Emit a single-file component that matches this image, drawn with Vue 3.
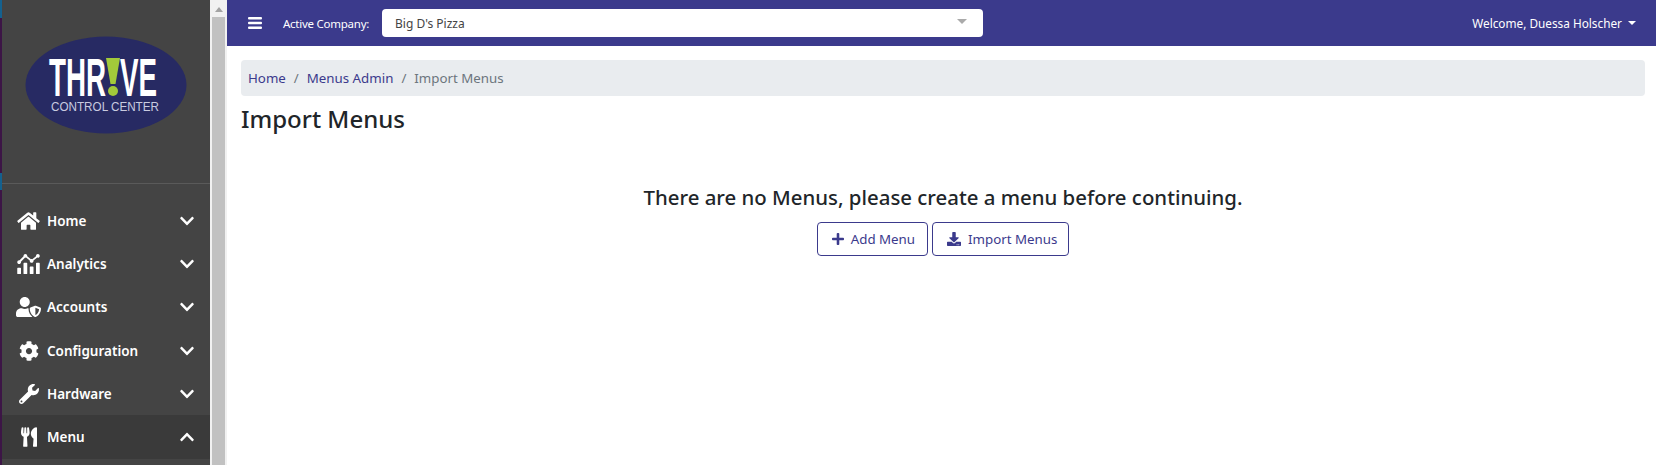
<script setup>
const chevronDown = 'M207.029 381.476L12.686 187.132c-9.373-9.373-9.373-24.569 0-33.941l22.667-22.667c9.357-9.357 24.522-9.375 33.901-.04L224 284.505l154.745-154.021c9.379-9.335 24.544-9.317 33.901.04l22.667 22.667c9.373 9.373 9.373 24.569 0 33.941L240.971 381.476c-9.373 9.372-24.569 9.372-33.942 0z'
const chevronUp = 'M240.971 130.524l194.343 194.343c9.373 9.373 9.373 24.569 0 33.941l-22.667 22.667c-9.357 9.357-24.522 9.375-33.901.04L224 227.495 69.255 381.516c-9.379 9.335-24.544 9.317-33.901-.04l-22.667-22.667c-9.373-9.373-9.373-24.569 0-33.941L207.03 130.525c9.372-9.373 24.568-9.373 33.941-.001z'
const items = [
  { label: 'Home', vb: '0 0 576 512', w: 23, d: ['M280.37 148.26L96 300.11V464a16 16 0 0 0 16 16l112.06-.29a16 16 0 0 0 15.92-16V368a16 16 0 0 1 16-16h64a16 16 0 0 1 16 16v95.64a16 16 0 0 0 16 16.05L464 480a16 16 0 0 0 16-16V300L295.67 148.26a12.19 12.19 0 0 0-15.3 0zM571.6 251.47L488 182.56V44.05a12 12 0 0 0-12-12h-56a12 12 0 0 0-12 12v72.61L318.47 43a48 48 0 0 0-61 0L4.34 251.47a12 12 0 0 0-1.6 16.9l25.5 31A12 12 0 0 0 45.15 301l235.22-193.74a12.19 12.19 0 0 1 15.3 0L530.9 301a12 12 0 0 0 16.9-1.6l25.5-31a12 12 0 0 0-1.7-16.93z'] },
  { label: 'Analytics', vb: '0 0 576 512', w: 23, d: ['M510.62 92.63C516.03 94.74 521.85 96 528 96c26.51 0 48-21.49 48-48S554.51 0 528 0s-48 21.49-48 48c0 2.43.37 4.76.71 7.09l-95.34 76.27c-5.4-2.11-11.23-3.37-17.38-3.37s-11.97 1.26-17.38 3.37L255.29 55.1c.35-2.33.71-4.67.71-7.1 0-26.51-21.49-48-48-48s-48 21.49-48 48c0 4.27.74 8.34 1.78 12.28l-101.5 101.5C56.34 160.74 52.27 160 48 160c-26.51 0-48 21.49-48 48s21.49 48 48 48 48-21.49 48-48c0-4.27-.74-8.34-1.78-12.28l101.5-101.5C199.66 95.26 203.73 96 208 96c6.15 0 11.97-1.26 17.38-3.37l95.34 76.27c-.35 2.33-.71 4.67-.71 7.1 0 26.51 21.49 48 48 48s48-21.49 48-48c0-2.43-.37-4.76-.71-7.09l95.32-76.28zM400 320h-64c-8.84 0-16 7.16-16 16v160c0 8.84 7.16 16 16 16h64c8.84 0 16-7.16 16-16V336c0-8.84-7.16-16-16-16zm160-96h-64c-8.84 0-16 7.16-16 16v256c0 8.84 7.16 16 16 16h64c8.84 0 16-7.16 16-16V240c0-8.84-7.16-16-16-16zm-320 0h-64c-8.84 0-16 7.16-16 16v256c0 8.84 7.16 16 16 16h64c8.84 0 16-7.16 16-16V240c0-8.84-7.16-16-16-16zM80 352H16c-8.84 0-16 7.16-16 16v128c0 8.84 7.16 16 16 16h64c8.84 0 16-7.16 16-16V368c0-8.84-7.16-16-16-16z'] },
  { label: 'Accounts', vb: '0 0 640 512', w: 25, d: ['M622.3 271.1l-115.2-45c-4.1-1.6-12.6-3.7-22.2 0l-115.2 45c-10.7 4.2-17.7 14-17.7 24.9 0 111.6 68.7 188.8 132.9 213.9 9.6 3.7 18 1.6 22.2 0C558.4 489.9 640 420.5 640 296c0-10.9-7-20.7-17.7-24.9zM496 462.4V273.3l95.5 37.3c-5.6 87.1-60.9 135.4-95.5 151.8zM224 256c70.7 0 128-57.3 128-128S294.7 0 224 0 96 57.3 96 128s57.3 128 128 128zm96 40c0-2.5.8-4.8 1.1-7.2-2.5-.1-4.9-.8-7.5-.8h-16.7c-22.2 10.2-46.9 16-72.9 16s-50.6-5.8-72.9-16h-16.7C60.2 288 0 348.2 0 422.4V464c0 26.5 21.5 48 48 48h352c6.8 0 13.3-1.5 19.2-4-54-42.9-99.2-116.7-99.2-212z'] },
  { label: 'Configuration', vb: '0 0 512 512', w: 20, d: ['M487.4 315.7l-42.6-24.6c4.3-23.2 4.3-47 0-70.2l42.6-24.6c4.9-2.8 7.1-8.6 5.5-14-11.1-35.6-30-67.8-54.7-94.6-3.8-4.1-10-5.1-14.8-2.3L380.8 110c-17.9-15.4-38.5-27.3-60.8-35.1V25.8c0-5.6-3.9-10.5-9.4-11.7-36.7-8.2-74.3-7.8-109.2 0-5.5 1.2-9.4 6.1-9.4 11.7V75c-22.2 7.9-42.8 19.8-60.8 35.1L88.7 85.5c-4.9-2.8-11-1.9-14.8 2.3-24.7 26.7-43.6 58.9-54.7 94.6-1.7 5.4.6 11.2 5.5 14L67.3 221c-4.3 23.2-4.3 47 0 70.2l-42.6 24.6c-4.9 2.8-7.1 8.6-5.5 14 11.1 35.6 30 67.8 54.7 94.6 3.8 4.1 10 5.1 14.8 2.3l42.6-24.6c17.9 15.4 38.5 27.3 60.8 35.1v49.2c0 5.6 3.9 10.5 9.4 11.7 36.7 8.2 74.3 7.8 109.2 0 5.5-1.2 9.4-6.1 9.4-11.7v-49.2c22.2-7.9 42.8-19.8 60.8-35.1l42.6 24.6c4.9 2.8 11 1.9 14.8-2.3 24.7-26.7 43.6-58.9 54.7-94.6 1.5-5.5-.7-11.3-5.6-14.1zM256 336c-44.1 0-80-35.9-80-80s35.9-80 80-80 80 35.9 80 80-35.9 80-80 80z'] },
  { label: 'Hardware', vb: '0 0 512 512', w: 20, d: ['M507.73 109.1c-2.24-9.03-13.54-12.09-20.12-5.51l-74.36 74.36-67.88-11.31-11.31-67.88 74.36-74.36c6.62-6.62 3.43-17.9-5.66-20.16-47.38-11.74-99.55.91-136.58 37.93-39.64 39.64-50.55 97.1-34.05 147.2L18.74 402.76c-24.99 24.99-24.99 65.51 0 90.5 24.99 24.99 65.51 24.99 90.5 0l213.21-213.21c50.12 16.71 107.47 5.68 147.37-34.22 37.07-37.07 49.7-89.32 37.91-136.73zM64 472c-13.25 0-24-10.75-24-24 0-13.26 10.75-24 24-24s24 10.74 24 24c0 13.25-10.75 24-24 24z'] },
  { label: 'Menu', vb: '0 0 416 512', w: 16, open: true, d: ['M207.9 15.2c.8 4.7 16.1 94.5 16.1 128.8 0 52.3-27.8 89.6-68.9 104.6L168 486.7c.7 13.7-10.2 25.3-24 25.3H80c-13.7 0-24.7-11.5-24-25.3l12.9-238.1C27.7 233.6 0 196.2 0 144 0 109.6 15.3 19.9 16.1 15.2 19.3-5.1 61.4-5.4 64 16.3v141.2c1.3 3.4 15.1 3.2 16 0 1.4-25.3 7.9-139.2 8-141.8 3.3-20.8 44.7-20.8 47.9 0 .2 2.7 6.6 116.5 8 141.8.9 3.2 14.8 3.4 16 0V16.3c2.6-21.6 44.8-21.4 48-1.1zm119.2 285.7l-15 185.1c-1.2 14 9.9 26 23.9 26h56c13.3 0 24-10.7 24-24V24c0-13.2-10.7-24-24-24-82.5 0-221.4 178.5-64.9 300.9z'] },
]
</script>

<template>
  <div class="app">
    <div class="strip">
      <i class="s-blue s1"></i><i class="s-purple s2"></i><i class="s-blue s3"></i><i class="s-purple s4"></i>
    </div>
    <aside class="sidebar">
      <div class="brand">
        <svg class="logo" viewBox="0 0 162 98" width="162" height="98">
          <ellipse cx="81" cy="49" rx="80.5" ry="48.5" fill="#272a63" />
          <text x="24" y="60" class="lt" textLength="57" lengthAdjust="spacingAndGlyphs">THR</text>
          <polygon points="81,22 95,22 90.5,48 85.5,48" fill="#a2c93a" />
          <circle cx="88" cy="55" r="5" fill="#a2c93a" />
          <text x="95" y="60" class="lt" textLength="37" lengthAdjust="spacingAndGlyphs">VE</text>
          <text x="26" y="75" class="ls" textLength="108" lengthAdjust="spacingAndGlyphs">CONTROL CENTER</text>
        </svg>
      </div>
      <nav class="nav">
        <a v-for="it in items" :key="it.label" class="item" :class="{ open: it.open }">
          <span class="ico">
            <svg :viewBox="it.vb" :style="{ width: it.w + 'px' }" height="20"><path v-for="p in it.d" :key="p" :d="p" fill="#fff" /></svg>
          </span>
          <span class="lbl">{{ it.label }}</span>
          <svg class="chev" viewBox="0 0 448 512" width="14" height="16"><path :d="it.open ? chevronUp : chevronDown" fill="#fff" /></svg>
        </a>
      </nav>
    </aside>
    <div class="scrollbar">
      <div class="arrow"></div>
      <div class="thumb"></div>
    </div>
    <main class="main">
      <header class="topbar">
        <svg class="bars" viewBox="0 0 14 12" width="14" height="12"><rect y="0" width="14" height="2.6" rx="1" fill="#fff"/><rect y="4.7" width="14" height="2.6" rx="1" fill="#fff"/><rect y="9.4" width="14" height="2.6" rx="1" fill="#fff"/></svg>
        <span class="active">Active Company:</span>
        <div class="select">
          <span>Big D's Pizza</span>
          <i class="sel-caret"></i>
        </div>
        <div class="welcome">Welcome, Duessa Holscher<i class="caret"></i></div>
      </header>
      <div class="content">
        <ol class="crumb">
          <li class="link">Home</li>
          <li class="sep">/</li>
          <li class="link">Menus Admin</li>
          <li class="sep">/</li>
          <li class="cur">Import Menus</li>
        </ol>
        <h1>Import Menus</h1>
        <div class="empty">
          <h2>There are no Menus, please create a menu before continuing.</h2>
          <div class="btns">
            <button class="btn add" type="button">
              <svg viewBox="0 0 448 512" width="12" height="14"><path fill="#3b3a8c" d="M416 208H272V64c0-17.67-14.33-32-32-32h-32c-17.67 0-32 14.33-32 32v144H32c-17.67 0-32 14.33-32 32v32c0 17.67 14.33 32 32 32h144v144c0 17.67 14.33 32 32 32h32c17.67 0 32-14.33 32-32V304h144c17.67 0 32-14.33 32-32v-32c0-17.67-14.33-32-32-32z"/></svg>
              Add Menu
            </button>
            <button class="btn imp" type="button">
              <svg viewBox="0 0 512 512" width="14" height="14"><path fill="#3b3a8c" d="M216 0h80c13.3 0 24 10.7 24 24v168h87.7c17.8 0 26.7 21.5 14.1 34.1L269.7 378.3c-7.5 7.5-19.8 7.5-27.3 0L90.1 226.1c-12.6-12.6-3.7-34.1 14.1-34.1H192V24c0-13.3 10.7-24 24-24zm296 376v112c0 13.3-10.7 24-24 24H24c-13.3 0-24-10.7-24-24V376c0-13.3 10.7-24 24-24h146.7l49 49c20.1 20.1 52.5 20.1 72.6 0l49-49H488c13.3 0 24 10.7 24 24zm-124 88c0-11-9-20-20-20s-20 9-20 20 9 20 20 20 20-9 20-20zm64 0c0-11-9-20-20-20s-20 9-20 20 9 20 20 20 20-9 20-20z"/></svg>
              Import Menus
            </button>
          </div>
        </div>
      </div>
    </main>
  </div>
</template>

<style>
html, body { margin: 0; overflow: hidden; background: #fff; }
</style>

<style scoped>
.app {
  display: flex;
  height: 465px;
  overflow: hidden;
  font-family: "Noto Sans", "Open Sans", sans-serif;
}
.strip { width: 2px; flex: none; display: flex; flex-direction: column; }
.strip i { display: block; }
.s-blue { background: #14618f; }
.s-purple { background: #3c1546; }
.s1 { height: 18px; }
.s2 { height: 155px; }
.s3 { height: 17px; }
.s4 { flex: 1; }
.sidebar { width: 208px; flex: none; background: #444; display: flex; flex-direction: column; }
.brand {
  height: 184px;
  box-sizing: border-box;
  border-bottom: 1px solid #5a5a5a;
  padding: 36px 0 0 23px;
}
.logo { display: block; }
.lt { font-family: "Liberation Sans", sans-serif; font-weight: 700; font-size: 53px; fill: #fff; }
.ls { font-family: "Liberation Sans", sans-serif; font-size: 13.5px; fill: #c9cbe0; }
.nav { display: flex; flex-direction: column; padding-top: 15px; }
.item {
  height: 43.3px;
  display: flex;
  align-items: center;
  padding: 0 16px 0 10.5px;
  color: #fff;
  font-size: 13.5px;
  font-weight: 600;
}
.item.open { background: #3a3a3a; }
.ico { width: 32px; display: flex; justify-content: center; flex: none; }
.lbl { margin-left: 2.5px; flex: 1; }
.chev { flex: none; }
.scrollbar { width: 17px; flex: none; background: #f1f1f1; position: relative; }
.arrow {
  width: 0; height: 0;
  margin: 7px auto 0;
  border-left: 4px solid transparent;
  border-right: 4px solid transparent;
  border-bottom: 5px solid #a3a3a3;
}
.thumb { margin: 5px 2px 0; height: 460px; background: #c1c1c1; }
.main { flex: 1; min-width: 0; display: flex; flex-direction: column; }
.topbar {
  height: 46px;
  flex: none;
  background: #3b3a8c;
  display: flex;
  align-items: center;
  padding: 0 20px 0 21px;
  color: #fff;
}
.bars { flex: none; }
.active { margin-left: 21px; font-size: 11.5px; width: 99px; flex: none; letter-spacing: -0.25px; }
.select {
  width: 601px;
  height: 28px;
  box-sizing: border-box;
  background: #fff;
  border-radius: 4px;
  color: #444;
  font-size: 12px;
  padding: 0 16px 3px 13px;
  display: flex;
  align-items: center;
  justify-content: space-between;
}
.select span { position: relative; top: 1.5px; }
.sel-caret {
  width: 0; height: 0;
  border-left: 5px solid transparent;
  border-right: 5px solid transparent;
  border-top: 5px solid #aaa;
}
.welcome { margin-left: auto; font-size: 11.8px; display: flex; align-items: center; }
.caret {
  width: 0; height: 0;
  margin-left: 6px;
  border-left: 4px solid transparent;
  border-right: 4px solid transparent;
  border-top: 4px solid #fff;
}
.content { padding: 14px 11px 0 14px; }
.crumb {
  list-style: none;
  margin: 0;
  height: 36px;
  box-sizing: border-box;
  padding: 0 7px;
  background: #e9ecef;
  border-radius: 4px;
  display: flex;
  align-items: center;
  font-size: 13.3px;
  gap: 8px;
}
.link { color: #3b3a8c; }
.sep, .cur { color: #6c757d; }
h1 { margin: 8px 0 0; font-size: 24px; font-weight: 500; line-height: 29px; color: #212529; }
.empty { display: flex; flex-direction: column; align-items: center; margin-top: 48px; }
h2 { margin: 0; font-size: 20.4px; font-weight: 500; line-height: 32px; color: #212529; }
.btns { display: flex; gap: 4px; margin-top: 9px; }
.btn {
  height: 34px;
  box-sizing: border-box;
  background: #fff;
  border: 1px solid #3b3a8c;
  border-radius: 4px;
  color: #3b3a8c;
  font-family: inherit;
  font-size: 13.3px;
  display: flex;
  align-items: center;
  gap: 7px;
  padding: 0 12px 0 14px;
}
.imp { padding-right: 11px; }
</style>
